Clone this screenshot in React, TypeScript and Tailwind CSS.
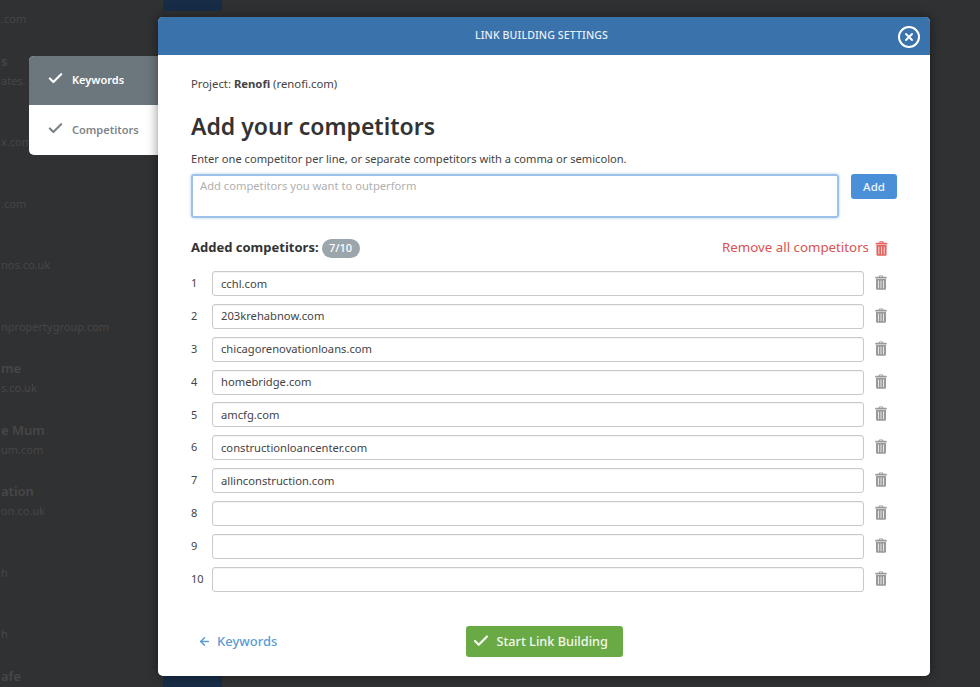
import { ArrowLeft, Check, CircleX } from "lucide-react";

const BACKGROUND_ROWS: [string, string][] = [
  ["", ".com"],
  ["s", "ates."],
  ["", "x.com"],
  ["", ".com"],
  ["", "nos.co.uk"],
  ["", "npropertygroup.com"],
  ["me", "s.co.uk"],
  ["e Mum", "um.com"],
  ["ation", "on.co.uk"],
  ["", "h"],
  ["", "h"],
  ["afe", ""],
];

const COMPETITORS = [
  "cchl.com",
  "203krehabnow.com",
  "chicagorenovationloans.com",
  "homebridge.com",
  "amcfg.com",
  "constructionloancenter.com",
  "allinconstruction.com",
  "",
  "",
  "",
];

function TrashIcon({ className }: { className?: string }) {
  return (
    <svg viewBox="0 0 13 16" className={className} fill="currentColor" aria-hidden>
      <path d="M4.200 1.800V1a.7.7 0 0 1 .7-.7h3.200a.7.7 0 0 1 .7.7v.8h3a1 1 0 0 1 1 1v.8H.2v-.8a1 1 0 0 1 1-1zm1-.6v.6h2.600v-.6z" />
      <path
        fillRule="evenodd"
        d="M1.100 4.300h10.800v10.200a1.300 1.300 0 0 1-1.300 1.300H2.400a1.300 1.300 0 0 1-1.300-1.300zM3.300 5.800v8.400h.8V5.800zm2.800 0v8.400h.8V5.800zm2.800 0v8.400h.8V5.800z"
      />
    </svg>
  );
}

function CompetitorRow({ index, value }: { index: number; value: string }) {
  return (
    <div className="flex h-[25px] items-center">
      <span className="w-[21px] shrink-0 text-[11px] text-[#444]">{index}</span>
      <div className="flex h-[25px] w-[652px] items-center rounded-[3px] border border-[#c9c9c9] bg-white pt-[1px] pl-[8px] text-[11.2px] text-[#444] shadow-[inset_0_1px_1px_rgba(0,0,0,0.05)]">
        {value}
      </div>
      <TrashIcon className="ml-[11px] h-[15px] w-[12px] -translate-y-[1px] text-[#999]" />
    </div>
  );
}

export default function App() {
  return (
    <div className="relative h-[687px] w-[980px] overflow-hidden bg-[#303132] font-['Noto_Sans','Open_Sans',sans-serif]">
      {/* dimmed page behind the dialog */}
      <div className="-mt-[12px] flex flex-col">
        {BACKGROUND_ROWS.map(([title, sub], i) => (
          <div key={i} className="h-[61.5px] shrink-0 border-b border-[#323334] pl-px">
            <div className="h-[22px] text-[13px] leading-[22px] font-semibold text-[#464748]">{title}</div>
            <div className="text-[11px] leading-[18px] text-[#464748]">{sub}</div>
          </div>
        ))}
      </div>
      <div className="absolute top-0 left-[163px] h-[11px] w-[59px] rounded-b-[3px] bg-[#172d47]" />
      <div className="absolute top-[675px] left-[163px] h-[12px] w-[59px] rounded-t-[3px] bg-[#172d47]" />

      <div className="absolute inset-0 flex items-start pt-[17px] pl-[29px]">
        {/* step tabs */}
        <div className="mt-[39px] w-[129px] shrink-0 overflow-hidden rounded-l-[5px] bg-white text-[11px] font-semibold">
          <div className="flex h-[49px] items-center gap-[8px] bg-[#6b777d] pl-[18px] text-white">
            <Check className="h-[17px] w-[17px] -translate-y-[2px]" strokeWidth={3} />
            Keywords
          </div>
          <div className="flex h-[50px] items-center gap-[8px] pl-[18px] text-[#7d8488]">
            <Check className="h-[17px] w-[17px] -translate-y-[2px]" strokeWidth={3} />
            Competitors
          </div>
        </div>

        {/* dialog */}
        <div className="flex h-[659px] w-[772px] shrink-0 flex-col overflow-hidden rounded-[5px] bg-white shadow-[0_0_12px_rgba(0,0,0,0.45)]">
          <div className="relative flex h-[38px] shrink-0 items-center justify-center bg-[#3a72ab] pr-[5px] text-[10.6px] font-medium tracking-[0.1px] text-[#e8eff6] uppercase">
            Link Building Settings
            <CircleX className="absolute top-[8px] right-[9px] h-[24px] w-[24px] text-white" strokeWidth={2} />
          </div>

          <div className="flex flex-1 flex-col px-[33px]">
            <p className="mt-[20px] text-[11.3px] leading-[18px] text-[#444]">
              Project: <span className="font-bold">Renofi</span> (renofi.com)
            </p>
            <h1 className="mt-[16px] text-[23px] leading-[34px] font-semibold text-[#333]">Add your competitors</h1>
            <p className="mt-[8px] text-[11.13px] leading-[16px] text-[#444]">
              Enter one competitor per line, or separate competitors with a comma or semicolon.
            </p>

            <div className="mt-[7px] flex items-start">
              <div className="h-[44px] w-[648px] rounded-[3px] border-2 border-[#9dc1e8] px-[7px] py-[2px] text-[11.2px] text-[#b0b0b0] shadow-[0_0_3px_rgba(91,155,213,0.5)]">
                Add competitors you want to outperform
              </div>
              <button className="ml-[12px] h-[25px] w-[46px] rounded-[3px] bg-[#4a90d9] text-[11.5px] font-medium text-[#eef5fc]">
                Add
              </button>
            </div>

            <div className="mt-[19px] flex h-[22px] items-center">
              <span className="text-[13px] font-bold text-[#333]">Added competitors:</span>
              <span className="ml-[3px] flex h-[19px] w-[38px] items-center justify-center rounded-full bg-[#9aa6ab] text-[11px] font-medium text-white">
                7/10
              </span>
              <span className="ml-auto text-[13.3px] text-[#d9534f]">Remove all competitors</span>
              <TrashIcon className="mr-[9px] ml-[6px] h-[15px] w-[13px] text-[#e0645f]" />
            </div>

            <div className="mt-[12px] flex flex-col gap-[7.85px]">
              {COMPETITORS.map((value, i) => (
                <CompetitorRow key={i} index={i + 1} value={value} />
              ))}
            </div>

            <div className="relative mt-[34px] flex h-[31px] items-center justify-center">
              <a className="absolute top-[6px] left-[7px] flex items-center gap-[6px] text-[13px] font-medium text-[#5b9bd5]">
                <ArrowLeft className="h-[13px] w-[13px]" strokeWidth={2.75} />
                Keywords
              </a>
              <button className="flex h-[31px] w-[157px] items-center gap-[7px] rounded-[3px] bg-[#6aaa45] pl-[6px] text-[12.7px] font-medium text-[#f2f8ee]">
                <Check className="h-[18px] w-[18px]" strokeWidth={3} />
                Start Link Building
              </button>
            </div>
          </div>
        </div>
      </div>
    </div>
  );
}
